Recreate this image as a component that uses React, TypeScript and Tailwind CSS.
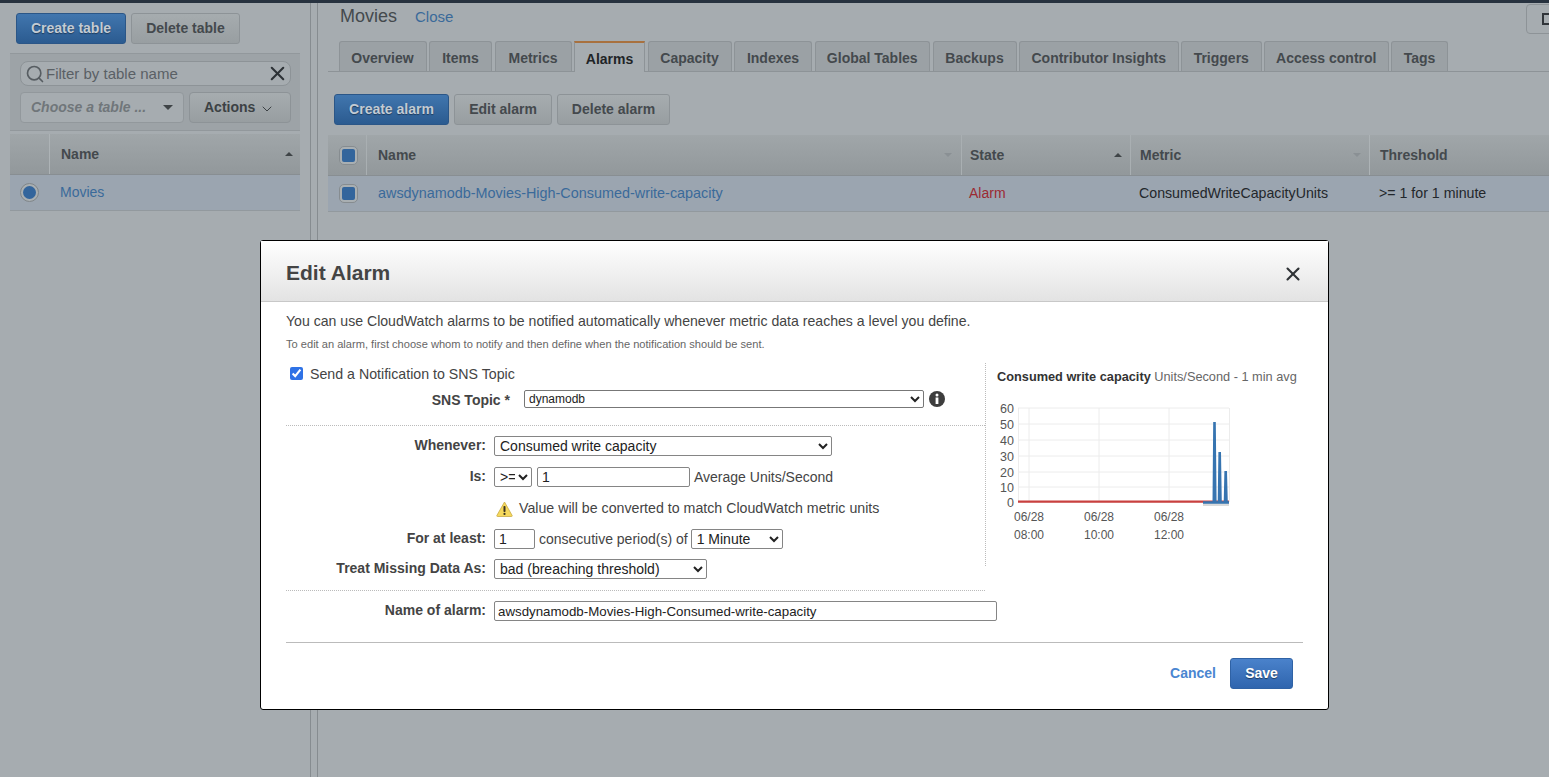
import { ChevronDown, Search, X } from "lucide-react";

const tabs = [
  { label: "Overview", w: "w-[88px]" },
  { label: "Items", w: "w-[63px]" },
  { label: "Metrics", w: "w-[77px]" },
  { label: "Alarms", w: "w-[71px]", active: true },
  { label: "Capacity", w: "w-[84px]" },
  { label: "Indexes", w: "w-[78px]" },
  { label: "Global Tables", w: "w-[115.5px]" },
  { label: "Backups", w: "w-[84px]" },
  { label: "Contributor Insights", w: "w-[159.5px]" },
  { label: "Triggers", w: "w-[80.5px]" },
  { label: "Access control", w: "w-[124.5px]" },
  { label: "Tags", w: "w-[57px]" },
];

function BlueButton({ label, w }: { label: string; w: string }) {
  return (
    <button className={`${w} h-[31px] rounded-[3px] border border-[#2b5687] bg-gradient-to-b from-[#4176ae] to-[#2b5b90] text-[14px] font-bold text-[#c3cbd3] [text-shadow:0_1px_1px_#1e3c5e]`}>
      {label}
    </button>
  );
}

function GreyButton({ label, w }: { label: string; w: string }) {
  return (
    <button className={`${w} h-[31px] rounded-[3px] border border-[#8d9397] bg-gradient-to-b from-[#a6acaf] to-[#989ea1] text-[14px] font-bold text-[#44494d]`}>
      {label}
    </button>
  );
}

function Caret({ up, light }: { up?: boolean; light?: boolean }) {
  return (
    <svg width="8" height="4" viewBox="0 0 8 4" className={light ? "text-[#8a9094]" : "text-[#3f4447]"}>
      <path d={up ? "M0 4 L4 0 L8 4 Z" : "M0 0 L8 0 L4 4 Z"} fill="currentColor" />
    </svg>
  );
}

function FakeCheck() {
  return (
    <span className="flex h-[19px] w-[19px] items-center justify-center rounded-[5px] border border-[#868c90] bg-[#a9afb2]">
      <span className="h-[13px] w-[13px] rounded-[2px] bg-[#33659c]" />
    </span>
  );
}

function Sidebar() {
  return (
    <aside className="flex w-[311px] shrink-0 flex-col border-r border-[#868c90] pl-[10px] pr-[10px]">
      <div className="flex gap-[5px] pl-[6px] pt-[10px]">
        <BlueButton label="Create table" w="w-[110px]" />
        <GreyButton label="Delete table" w="w-[109px]" />
      </div>
      <div className="mt-[9px] flex h-[78px] flex-col gap-[6px] border-y border-[#92989c] bg-[#9da3a7] pl-[10px] pr-[9px] pt-[7px]">
        <div className="flex h-[25px] items-center rounded-[8px] border border-[#8d9397] bg-[#a6acb0] pl-[4px] pr-[1px]">
          <Search size={20} strokeWidth={2} className="text-[#575d62]" />
          <span className="ml-[1px] flex-1 pt-[1px] text-[15px] text-[#5a6065]">Filter by table name</span>
          <X size={23} strokeWidth={2.2} className="text-[#2d3236]" />
        </div>
        <div className="flex gap-[5px]">
          <div className="flex h-[31px] w-[164px] items-center rounded-[4px] border border-[#92989c] bg-[#a6acb0] pl-[10px] pr-[10px]">
            <span className="flex-1 text-[14px] font-bold italic text-[#70767a]">Choose a table ...</span>
            <svg width="10" height="5" viewBox="0 0 10 5" className="text-[#3f4447]">
              <path d="M0 0 L10 0 L5 5 Z" fill="currentColor" />
            </svg>
          </div>
          <div className="flex h-[31px] flex-1 items-center gap-[4px] rounded-[4px] border border-[#8d9397] bg-gradient-to-b from-[#a6acaf] to-[#989ea1] pl-[14px] text-[14px] font-bold text-[#3c4144]">
            Actions
            <ChevronDown size={16} strokeWidth={1.5} className="mt-[3px]" />
          </div>
        </div>
      </div>
      <div className="mt-[3px] flex h-[41px] border-b border-[#888e92] bg-gradient-to-b from-[#a0a6a9] to-[#92989b]">
        <div className="w-[40px] border-r border-[#adb3b6]" />
        <div className="flex flex-1 items-center justify-between pl-[11px] pr-[7px] text-[14px] font-bold text-[#44494d]">
          Name
          <Caret up />
        </div>
      </div>
      <div className="flex h-[36px] items-center border-b border-[#92999e] bg-[#9ba5b0]">
        <span className="ml-[10px] flex h-[19px] w-[19px] items-center justify-center rounded-full border border-[#808689] bg-[#a9afb2]">
          <span className="h-[13px] w-[13px] rounded-full bg-[#33659c]" />
        </span>
        <span className="ml-[21px] text-[14px] text-[#3a6a9a]">Movies</span>
      </div>
    </aside>
  );
}

function Detail() {
  return (
    <main className="relative ml-[6px] flex-1 border-l border-[#868c90] pl-[10px]">
      <div className="flex h-[28px] items-baseline pl-[12px]">
        <span className="text-[18px] text-[#44494d]">Movies</span>
        <span className="ml-[18px] text-[15px] text-[#3a6a9a]">Close</span>
      </div>
      <div className="mt-[10px] flex h-[31px] gap-[2.5px] border-b border-[#8d9397] pl-[10.5px]">
        {tabs.map((t) =>
          t.active ? (
            <div key={t.label} className={`${t.w} z-10 flex h-[31px] shrink-0 items-center justify-center border-x border-t-[2px] border-x-[#8d9397] border-t-[#a8713f] bg-[#a6acb0] pt-[3px] text-[14px] font-bold text-[#1f2427]`}>
              {t.label}
            </div>
          ) : (
            <div key={t.label} className={`${t.w} flex h-[30px] shrink-0 items-center justify-center rounded-t-[3px] border border-b-0 border-[#8d9397] bg-[#9ba1a5] pt-[3px] text-[14px] font-bold text-[#44494d]`}>
              {t.label}
            </div>
          ),
        )}
      </div>
      <div className="mt-[22px] flex gap-[5px] pl-[6px]">
        <BlueButton label="Create alarm" w="w-[115px]" />
        <GreyButton label="Edit alarm" w="w-[98px]" />
        <GreyButton label="Delete alarm" w="w-[113px]" />
      </div>
      <div className="mt-[10px] grid h-[41px] grid-cols-[38px_595px_169px_239px_1fr] border-b border-[#888e92] bg-gradient-to-b from-[#a0a6a9] to-[#92989b] text-[14px] font-bold text-[#44494d]">
        <div className="flex items-center pl-[11px]"><FakeCheck /></div>
        <div className="flex items-center justify-between border-l border-[#a9afb2] pl-[11px] pr-[9px]">Name<Caret light /></div>
        <div className="flex items-center justify-between border-l border-[#a9afb2] pl-[8px] pr-[8px]">State<Caret up /></div>
        <div className="flex items-center justify-between border-l border-[#a9afb2] pl-[9px] pr-[8px]">Metric<Caret light /></div>
        <div className="flex items-center border-l border-[#adb3b6] pl-[10px]">Threshold</div>
      </div>
      <div className="grid h-[36px] grid-cols-[38px_595px_169px_239px_1fr] items-center border-b border-[#92999e] bg-[#9ba5b0] text-[14.2px]">
        <div className="pl-[11px]"><FakeCheck /></div>
        <div className="pl-[12px] text-[14.4px] text-[#3a6a9a]">awsdynamodb-Movies-High-Consumed-write-capacity</div>
        <div className="pl-[8px] text-[14px] text-[#9c2a33]">Alarm</div>
        <div className="pl-[9px] text-[#23272b]">ConsumedWriteCapacityUnits</div>
        <div className="pl-[10px] text-[#23272b]">&gt;= 1 for 1 minute</div>
      </div>
      <div className="absolute right-[-8px] top-[1px] flex h-[30px] w-[31px] items-center rounded-[4px] border border-[#8d9397] bg-[#a6acb0] pl-[15px]">
        <span className="h-[12px] w-[8px] border-2 border-r-0 border-[#30353a]" />
      </div>
    </main>
  );
}

function Chart() {
  const grid = [407, 423, 439, 455, 471, 486, 501];
  const yLabels = ["60", "50", "40", "30", "20", "10", "0"];
  const ticks = [
    { x: 1029, t: "08:00" },
    { x: 1099, t: "10:00" },
    { x: 1169, t: "12:00" },
  ];
  return (
    <svg width="250" height="150" viewBox="990 400 250 150" className="block">
      {grid.map((y, i) => (
        <g key={y}>
          <line x1="1018" x2="1229" y1={y} y2={y} stroke="#ececec" />
          <text x="1014" y={y + 4.5} textAnchor="end" fontSize="12.5" fill="#555">{yLabels[i]}</text>
        </g>
      ))}
      <line x1="1018.5" x2="1018.5" y1="407" y2="501" stroke="#ececec" />
      <line x1="1229.5" x2="1229.5" y1="407" y2="501" stroke="#ececec" />
      {ticks.map((k) => (
        <g key={k.x}>
          <line x1={k.x} x2={k.x} y1="407" y2="501" stroke="#ececec" />
          <text x={k.x} y="520" textAnchor="middle" fontSize="12" fill="#555">06/28</text>
          <text x={k.x} y="538" textAnchor="middle" fontSize="12" fill="#555">{k.t}</text>
        </g>
      ))}
      <rect x="1203" y="501" width="26" height="4" fill="#d9dadb" />
      <line x1="1018" x2="1229" y1="500.6" y2="500.6" stroke="#c9403f" strokeWidth="2.2" />
      <path d="M1203 501.5 H1213.8 L1214.5 421 L1215.3 501.5 H1219 L1219.7 451 L1220.5 501.5 H1225 L1225.7 470 L1226.5 501.5 L1229 501.5" fill="#3674b0" stroke="#3674b0" strokeWidth="2.6" />
    </svg>
  );
}

function Label({ children }: { children: string }) {
  return <label className="w-[200px] shrink-0 pb-[1px] text-right text-[14px] font-bold text-[#444]">{children}</label>;
}

function EditAlarm() {
  const field = "rounded-[2px] border border-[#858585] bg-white text-[14px] leading-none text-[#222] pl-[1px]";
  return (
    <div className="absolute left-[260px] top-[240px] flex h-[470px] w-[1069px] flex-col rounded-[3px] border border-black bg-white text-[#444]">
      <div className="flex h-[61px] shrink-0 items-center justify-between border-b border-[#c8c8c8] bg-gradient-to-b from-white to-[#e3e3e3] pl-[25px] pr-[24px] pt-[4px]">
        <h2 className="text-[21px] font-bold text-[#444]">Edit Alarm</h2>
        <X size={22} strokeWidth={2.3} className="translate-y-[1px] text-[#2f3336]" />
      </div>
      <div className="flex-1 px-[25px]">
        <p className="mt-[11px] text-[14.1px] leading-[16px]">You can use CloudWatch alarms to be notified automatically whenever metric data reaches a level you define.</p>
        <p className="mt-[9px] text-[11.1px] leading-[12px] text-[#666]">To edit an alarm, first choose whom to notify and then define when the notification should be sent.</p>
        <div className="mt-[13px] flex items-start">
          <div className="w-[699px] shrink-0">
            <div className="flex h-[21px] items-center pl-[4px]">
              <input type="checkbox" defaultChecked className="h-[13px] w-[13px] accent-[#2f72e6]" />
              <span className="ml-[7px] text-[14.2px] leading-[16px]">Send a Notification to SNS Topic</span>
            </div>
            <div className="mt-[5px] flex h-[20px] items-center">
              <label className="w-[224px] shrink-0 pt-[2px] text-right text-[14px] font-bold text-[#444]">SNS Topic *</label>
              <select className="ml-[14px] h-[18px] w-[400px] rounded-[2px] border border-[#777] bg-white text-[12px] leading-none text-[#222]" defaultValue="dynamodb">
                <option>dynamodb</option>
              </select>
              <svg width="16" height="16" viewBox="0 0 16 16" className="ml-[5px]">
                <circle cx="8" cy="8" r="8" fill="#3d3d3d" />
                <circle cx="8" cy="4" r="1.5" fill="#fff" />
                <rect x="6.6" y="6.5" width="2.8" height="6.5" fill="#fff" />
              </svg>
            </div>
            <div className="mt-[16px] border-t border-dotted border-[#bbb]" />
            <div className="mt-[10px] flex h-[20px] items-center gap-[8px]">
              <Label>Whenever:</Label>
              <select className={`${field} h-[20px] w-[338px]`} defaultValue="Consumed write capacity">
                <option>Consumed write capacity</option>
              </select>
            </div>
            <div className="mt-[11px] flex h-[20px] items-center gap-[8px]">
              <Label>Is:</Label>
              <select className={`${field} h-[20px] w-[38px]`} defaultValue=">=">
                <option>&gt;=</option>
              </select>
              <input readOnly value="1" className="-ml-[3px] h-[20px] w-[153px] rounded-[2px] border border-[#858585] pl-[4px] text-[14px] text-[#222]" />
              <span className="-ml-[4px] text-[14px]">Average Units/Second</span>
            </div>
            <div className="mt-[12px] flex h-[20px] items-center pl-[210px]">
              <svg width="17" height="16" viewBox="0 0 17 16">
                <path d="M8.5 1 L16.2 14.6 Q16.4 15.5 15.4 15.5 H1.6 Q.6 15.5 .8 14.6 Z" fill="#f6d95c" stroke="#c9ab45" strokeWidth="0.8" />
                <rect x="7.5" y="5" width="2" height="6" rx="0.8" fill="#3a3320" />
                <circle cx="8.5" cy="12.9" r="1.1" fill="#3a3320" />
              </svg>
              <span className="ml-[6px] text-[14.2px]">Value will be converted to match CloudWatch metric units</span>
            </div>
            <div className="mt-[10px] flex h-[20px] items-center gap-[8px]">
              <Label>For at least:</Label>
              <input readOnly value="1" className="h-[20px] w-[41px] rounded-[2px] border border-[#858585] pl-[4px] text-[14px] text-[#222]" />
              <span className="-ml-[4px] text-[14px]">consecutive period(s) of</span>
              <select className={`${field} -ml-[5px] h-[20px] w-[92px]`} defaultValue="1 Minute">
                <option>1 Minute</option>
              </select>
            </div>
            <div className="mt-[10px] flex h-[20px] items-center gap-[8px]">
              <Label>Treat Missing Data As:</Label>
              <select className={`${field} h-[20px] w-[213px]`} defaultValue="bad (breaching threshold)">
                <option>bad (breaching threshold)</option>
              </select>
            </div>
            <div className="mt-[11px] border-t border-dotted border-[#bbb]" />
          </div>
          <div className="h-[203px] flex-1 border-l border-dotted border-[#bbb] pl-[11px] pt-[7px]">
            <p className="whitespace-nowrap text-[12.75px] leading-[14px] text-[#666]">
              <b className="text-[#333]">Consumed write capacity</b> Units/Second - 1 min avg
            </p>
            <div className="-ml-[7px] mt-[17px]"><Chart /></div>
          </div>
        </div>
        <div className="mt-[10px] flex h-[20px] items-center gap-[8px]">
          <Label>Name of alarm:</Label>
          <input readOnly value="awsdynamodb-Movies-High-Consumed-write-capacity" className="h-[20px] w-[503px] rounded-[2px] border border-[#858585] pl-[3px] text-[13.3px] text-[#222]" />
        </div>
        <div className="mt-[21px] border-t border-[#bbb]" />
        <div className="mt-[15px] flex items-center justify-end gap-[14px] pr-[10px]">
          <span className="text-[14px] font-bold text-[#4a86d1]">Cancel</span>
          <button className="h-[31px] w-[63px] rounded-[3px] border border-[#2f62a5] bg-gradient-to-b from-[#4a82cb] to-[#2f65ae] text-[14px] font-bold text-white [text-shadow:0_1px_1px_#1e3c5e]">
            Save
          </button>
        </div>
      </div>
    </div>
  );
}

export default function App() {
  return (
    <div className="relative h-screen w-full overflow-hidden bg-[#a6acb0] font-['Liberation_Sans',Arial,sans-serif]">
      <div className="h-[3px] bg-[#27323f]" />
      <div className="flex h-[774px]">
        <Sidebar />
        <Detail />
      </div>
      <EditAlarm />
    </div>
  );
}
